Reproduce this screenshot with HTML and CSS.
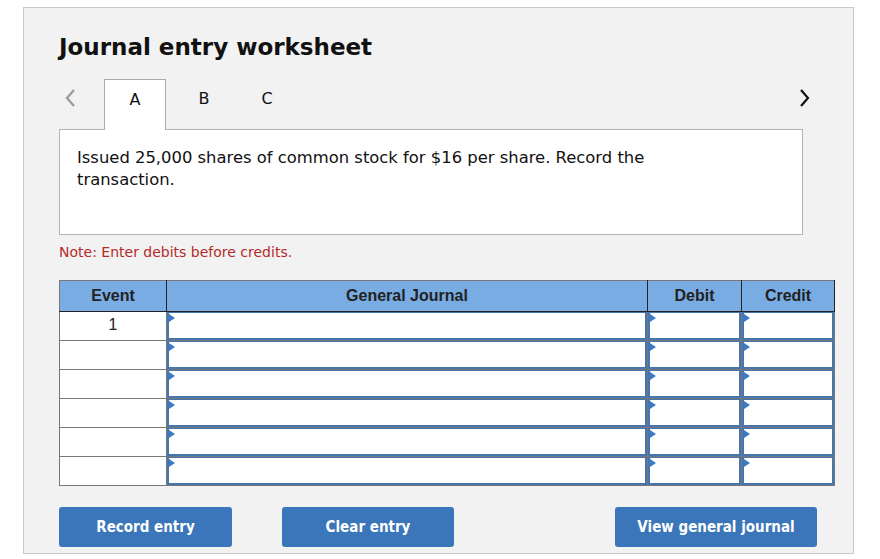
FILE: index.html
```html
<!DOCTYPE html>
<html lang="en">
<head>
  <meta charset="UTF-8" />
  <meta name="viewport" content="width=device-width, initial-scale=1.0" />
  <title>Journal entry worksheet</title>
  <link rel="stylesheet" href="styles.css">
</head>
<body>

<div class="worksheet">
  <h1>Journal entry worksheet</h1>

  <!-- Tabs for the transactions -->
  <div class="tab-row">
    <span class="nav-arrow prev">
      <svg width="12" height="18" viewBox="0 0 12 18"><path d="M10 1 L3 9 L10 17" fill="none" stroke="#999" stroke-width="2.2"/></svg>
    </span>
    <span class="tab active">A</span>
    <span class="tab tab-b">B</span>
    <span class="tab tab-c">C</span>
    <span class="nav-arrow next">
      <svg width="12" height="18" viewBox="0 0 12 18"><path d="M2 1 L9 9 L2 17" fill="none" stroke="#111" stroke-width="2.2"/></svg>
    </span>
  </div>

  <div class="question-box">
    <p>Issued 25,000 shares of common stock for $16 per share. Record the transaction.</p>
  </div>

  <p class="note">Note: Enter debits before credits.</p>

  <!-- Journal table -->
  <table class="journal-table">
    <thead>
      <tr>
        <th class="col-event">Event</th>
        <th class="col-journal">General Journal</th>
        <th class="col-debit">Debit</th>
        <th class="col-credit">Credit</th>
      </tr>
    </thead>
    <tbody>
      <tr>
        <td class="event">1</td>
        <td><div class="entry"></div></td>
        <td><div class="entry"></div></td>
        <td><div class="entry"></div></td>
      </tr>
      <tr>
        <td class="event"></td>
        <td><div class="entry"></div></td>
        <td><div class="entry"></div></td>
        <td><div class="entry"></div></td>
      </tr>
      <tr>
        <td class="event"></td>
        <td><div class="entry"></div></td>
        <td><div class="entry"></div></td>
        <td><div class="entry"></div></td>
      </tr>
      <tr>
        <td class="event"></td>
        <td><div class="entry"></div></td>
        <td><div class="entry"></div></td>
        <td><div class="entry"></div></td>
      </tr>
      <tr>
        <td class="event"></td>
        <td><div class="entry"></div></td>
        <td><div class="entry"></div></td>
        <td><div class="entry"></div></td>
      </tr>
      <tr>
        <td class="event"></td>
        <td><div class="entry"></div></td>
        <td><div class="entry"></div></td>
        <td><div class="entry"></div></td>
      </tr>
    </tbody>
  </table>

  <div class="button-row">
    <button class="action-btn record-btn">Record entry</button>
    <button class="action-btn clear-btn">Clear entry</button>
    <button class="action-btn view-btn">View general journal</button>
  </div>
</div>

</body>
</html>
```

FILE: styles.css
```css
/* =========================
   General Page Styling
   ========================= */
body {
  font-family: "DejaVu Sans", Verdana, sans-serif;
  background-color: #fff;
  margin: 0;
  padding: 0;
}

.worksheet {
  box-sizing: border-box;
  margin: 7px 0 0 23px;
  width: 831px;
  height: 547px;
  padding: 27px 50px 0 35px;
  background-color: #f2f2f2;
  border: 1px solid #c8c8c8;
}

h1 {
  margin: 0;
  font-size: 23px;
  line-height: 24px;
  font-weight: bold;
  color: #111;
}

/* =========================
   Tabs
   ========================= */
.tab-row {
  display: flex;
  align-items: stretch;
  height: 51px;
  margin-top: 20px;
  margin-right: -31px;
  position: relative;
  z-index: 1;
}

.nav-arrow {
  width: 45px;
  padding: 10px 0 0 5px;
  box-sizing: border-box;
}

.nav-arrow.next {
  margin-left: auto;
  width: 40px;
}

.tab {
  font-size: 16px;
  line-height: 40px;
  text-align: center;
  color: #111;
}

.tab.active {
  box-sizing: border-box;
  width: 62px;
  background-color: #fff;
  border: 1px solid #aaa;
  border-bottom: none;
}

.tab-b { width: 76px; }
.tab-c { width: 50px; }

/* =========================
   Question Box
   ========================= */
.question-box {
  box-sizing: border-box;
  height: 106px;
  margin-top: -1px;
  padding: 17px 17px;
  background-color: #fff;
  border: 1px solid #b4b4b4;
}

.question-box p {
  margin: 0;
  max-width: 640px;
  font-size: 16.4px;
  line-height: 22px;
  color: #111;
}

.note {
  margin: 8px 0 0;
  font-size: 14px;
  line-height: 18px;
  color: #b52a2a;
}

/* =========================
   Journal Table
   ========================= */
.journal-table {
  width: 775px;
  margin-top: 19px;
  border-collapse: collapse;
  table-layout: fixed;
  font-family: "Liberation Sans", Arial, sans-serif;
}

.journal-table th {
  height: 30px;
  padding: 0;
  background-color: #78ace3;
  border: 1px solid #222;
  border-top-color: #777;
  font-size: 16px;
  font-weight: bold;
  color: #222;
}

.journal-table th.col-event { border-left-color: #777; }

.col-event { width: 106px; }
.col-journal { width: 480px; }
.col-debit { width: 93px; }
.col-credit { width: 92px; }

.journal-table td {
  height: 28px;
  padding: 0;
  background-color: #fff;
  border: 1px solid #777;
}

.journal-table td.event {
  text-align: center;
  vertical-align: top;
  font-size: 16px;
  line-height: 26px;
  color: #222;
}

.entry {
  position: relative;
  box-sizing: border-box;
  height: 28px;
  border: 2px solid #4675b0;
  border-top-width: 1px;
  background-color: #fff;
}

.entry::before {
  content: "";
  position: absolute;
  left: 0;
  top: 1px;
  border-top: 4px solid transparent;
  border-bottom: 4px solid transparent;
  border-left: 6px solid #3a7bc8;
}

/* =========================
   Buttons
   ========================= */
.button-row {
  display: flex;
  margin-top: 21px;
}

.action-btn {
  flex-shrink: 0;
  height: 40px;
  border: none;
  border-radius: 3px;
  background-color: #3a76b9;
  color: #fff;
  font-family: "DejaVu Sans Condensed", "DejaVu Sans", sans-serif;
  font-size: 15px;
  font-weight: bold;
  cursor: pointer;
}

.record-btn { width: 173px; }
.clear-btn { width: 172px; margin-left: 50px; }
.view-btn { width: 202px; margin-left: 161px; }
```
